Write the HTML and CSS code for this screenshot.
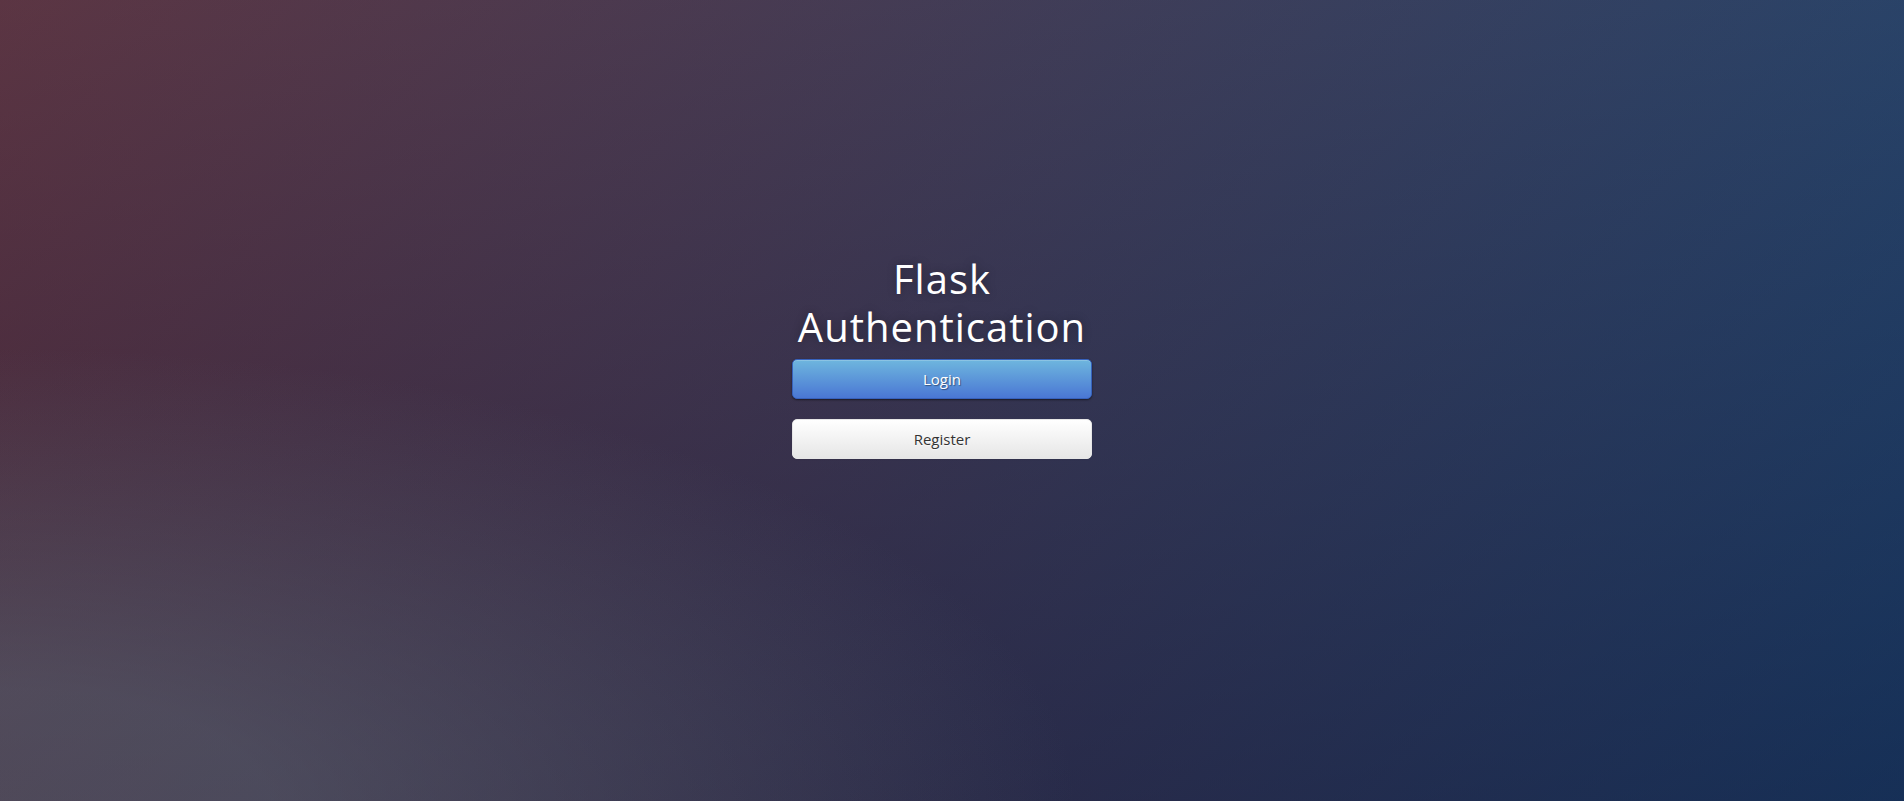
FILE: index.html
```html
<!DOCTYPE html>
<html lang="en">
<head>
  <meta charset="UTF-8">
  <title>Flask Authentication</title>
  <meta name="viewport" content="width=device-width, initial-scale=1.0">
  <link rel="stylesheet" href="styles.css">
</head>
<body>

  <div class="login">
    <h1>Flask Authentication</h1>
    <a class="btn btn-primary btn-block btn-large" href="#">Login</a>
    <a class="btn btn-block btn-large" href="#">Register</a>
  </div>

</body>
</html>
```

FILE: styles.css
```css
* {
  box-sizing: border-box;
}

html {
  width: 100%;
  height: 100%;
  overflow: hidden;
}

body {
  width: 100%;
  height: 100%;
  margin: 0;
  padding-right: 20px;
  font-family: 'Open Sans', sans-serif;
  background: #092756;
  background:
    radial-gradient(ellipse farthest-corner at 0% 100%, rgba(104, 128, 138, 0.4) 10%, rgba(138, 114, 76, 0) 40%),
    linear-gradient(to bottom, rgba(57, 173, 219, 0.25) 0%, rgba(42, 60, 87, 0.4) 100%),
    linear-gradient(135deg, #670d10 0%, #092756 100%);
  display: flex;
  align-items: center;
  justify-content: center;
}

.login {
  width: 300px;
  height: 300px;
}

.login h1 {
  color: #fff;
  text-shadow: 0 0 10px rgba(0, 0, 0, 0.3);
  letter-spacing: 1px;
  text-align: center;
  font-size: 40px;
  line-height: 48px;
  font-weight: normal;
  margin: 4px 0 8px;
}

.btn {
  display: inline-block;
  padding: 4px 10px;
  margin-bottom: 0;
  font-size: 13px;
  line-height: 18px;
  color: #333;
  text-align: center;
  text-decoration: none;
  text-shadow: 0 1px 1px rgba(255, 255, 255, 0.75);
  vertical-align: middle;
  background-color: #f5f5f5;
  background-image: linear-gradient(to bottom, #ffffff, #e6e6e6);
  border: 1px solid #e6e6e6;
  border-radius: 4px;
  box-shadow: inset 0 1px 0 rgba(255, 255, 255, 0.2), 0 1px 2px rgba(0, 0, 0, 0.05);
  cursor: pointer;
}

.btn-primary {
  color: #fff;
  background-color: #4a77d4;
  background-image: linear-gradient(to bottom, #6eb6de, #4a77d4);
  border: 1px solid #3762bc;
  text-shadow: 1px 1px 1px rgba(0, 0, 0, 0.4);
  box-shadow: inset 0 1px 0 rgba(255, 255, 255, 0.2), 0 1px 2px rgba(0, 0, 0, 0.5);
}

.btn-block {
  width: 100%;
  display: block;
}

.btn-large {
  padding: 9px 14px;
  font-size: 15px;
  line-height: normal;
  border-radius: 5px;
}

.btn-primary + .btn {
  margin-top: 20px;
}
```
